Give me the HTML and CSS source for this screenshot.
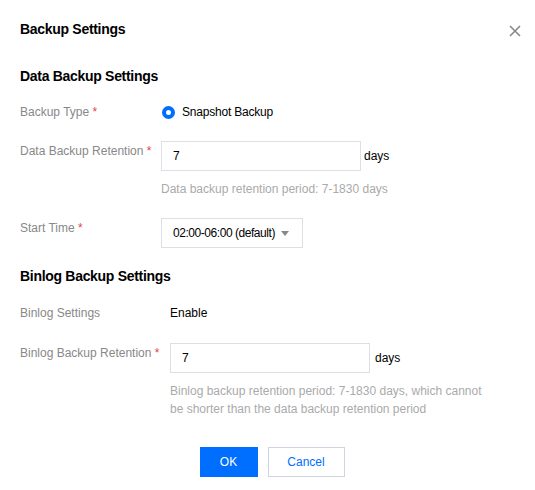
FILE: index.html
```html
<!DOCTYPE html>
<html>
<head>
<meta charset="utf-8">
<link rel="stylesheet" href="styles.css">
</head>
<body>
<div class="dialog">
  <div class="header">
    <div class="title">Backup Settings</div>
    <button class="close" aria-label="Close">
      <svg width="12" height="12" viewBox="0 0 12 12"><path d="M1 1L11 11M11 1L1 11" stroke="#888" stroke-width="1.6" fill="none"/></svg>
    </button>
  </div>

  <div class="section-title first">Data Backup Settings</div>
  <div class="row short r-type">
    <div class="label">Backup Type <span class="req">*</span></div>
    <div class="control">
      <label class="radio"><span class="dot"></span>Snapshot Backup</label>
    </div>
  </div>
  <div class="row r-data">
    <div class="label">Data Backup Retention <span class="req">*</span></div>
    <div class="control col">
      <div class="inline">
        <div class="input">7</div><span class="unit">days</span>
      </div>
      <div class="help">Data backup retention period: 7-1830 days</div>
    </div>
  </div>
  <div class="row r-time">
    <div class="label">Start Time <span class="req">*</span></div>
    <div class="control">
      <div class="select"><span class="sel-text">02:00-06:00 (default)</span><span class="caret"></span></div>
    </div>
  </div>

  <div class="section-title second">Binlog Backup Settings</div>
  <div class="row short wide r-binset">
    <div class="label">Binlog Settings</div>
    <div class="control"><span class="value">Enable</span></div>
  </div>
  <div class="row wide r-binret">
    <div class="label">Binlog Backup Retention <span class="req">*</span></div>
    <div class="control col">
      <div class="inline">
        <div class="input">7</div><span class="unit u2">days</span>
      </div>
      <div class="help">Binlog backup retention period: 7-1830 days, which cannot<br>be shorter than the data backup retention period</div>
    </div>
  </div>

  <div class="footer">
    <button class="btn primary">OK</button>
    <button class="btn ghost">Cancel</button>
  </div>
</div>
</body>
</html>
```

FILE: styles.css
```css
* { box-sizing: border-box; }
html, body { margin: 0; padding: 0; background: #fff; }
body {
  font-family: "Liberation Sans", Arial, sans-serif;
  font-size: 12px;
  color: #000;
}
.dialog {
  width: 535px;
  height: 490px;
  padding: 20px 14px 0 20px;
}
.header {
  display: flex;
  justify-content: space-between;
  align-items: center;
  height: 18px;
}
.title {
  font-weight: bold;
  font-size: 14px;
  line-height: 18px;
  letter-spacing: -0.3px;
}
.close {
  border: 0;
  background: none;
  padding: 0;
  width: 12px;
  height: 12px;
  margin-top: 4px;
  display: flex;
}
.section-title {
  font-weight: bold;
  font-size: 14px;
  line-height: 18px;
  letter-spacing: -0.3px;
}
.section-title.first { margin-top: 29px; }
.section-title.second { margin-top: 19px; }
.row {
  display: flex;
  align-items: flex-start;
}
.label {
  width: 141px;
  flex: none;
  color: #888;
  line-height: 18px;
  padding-top: 1px;
}
.row.wide .label { width: 150px; }
.req { color: #e54545; }
.control {
  display: flex;
  align-items: center;
  min-height: 30px;
}
.row.short .label { padding-top: 0; }
.row.short .control { min-height: 18px; }
.control.col {
  flex-direction: column;
  align-items: flex-start;
}
.inline { display: flex; align-items: center; }
.r-type { margin-top: 18px; }
.r-data { margin-top: 20px; }
.r-time { margin-top: 20px; }
.r-binset { margin-top: 19px; }
.r-binret { margin-top: 21px; }
.radio {
  display: flex;
  align-items: center;
  color: #000;
  letter-spacing: -0.2px;
  line-height: 18px;
}
.dot {
  width: 13px;
  height: 13px;
  border-radius: 50%;
  border: 4px solid #006eff;
  background: #fff;
  margin: 0 7px 0 1px;
}
.input {
  width: 200px;
  height: 30px;
  border: 1px solid #dcdfe6;
  padding: 0 11px;
  line-height: 28px;
  color: #000;
}
.unit { margin-left: 3px; color: #000; }
.unit.u2 { margin-left: 5px; }
.help {
  margin-top: 9px;
  color: #aaa;
  line-height: 18px;
}
.select {
  height: 30px;
  width: 142px;
  border: 1px solid #dcdfe6;
  padding: 0 0 0 11px;
  line-height: 28px;
  display: flex;
  align-items: center;
  color: #000;
}
.sel-text { letter-spacing: -0.45px; }
.caret {
  width: 0;
  height: 0;
  border-left: 4px solid transparent;
  border-right: 4px solid transparent;
  border-top: 5px solid #888;
  margin-left: 6px;
}
.value { color: #000; line-height: 18px; }
.footer {
  display: flex;
  justify-content: center;
  gap: 10px;
  margin-top: 29px;
  padding-left: 3px;
}
.btn {
  height: 30px;
  padding: 0;
  font-family: inherit;
  font-size: 12px;
  border: 1px solid transparent;
  background: #fff;
}
.btn.primary {
  background: #006eff;
  color: #fff;
  width: 58px;
}
.btn.ghost {
  border-color: #cfd5de;
  color: #006eff;
  width: 77px;
}
```
